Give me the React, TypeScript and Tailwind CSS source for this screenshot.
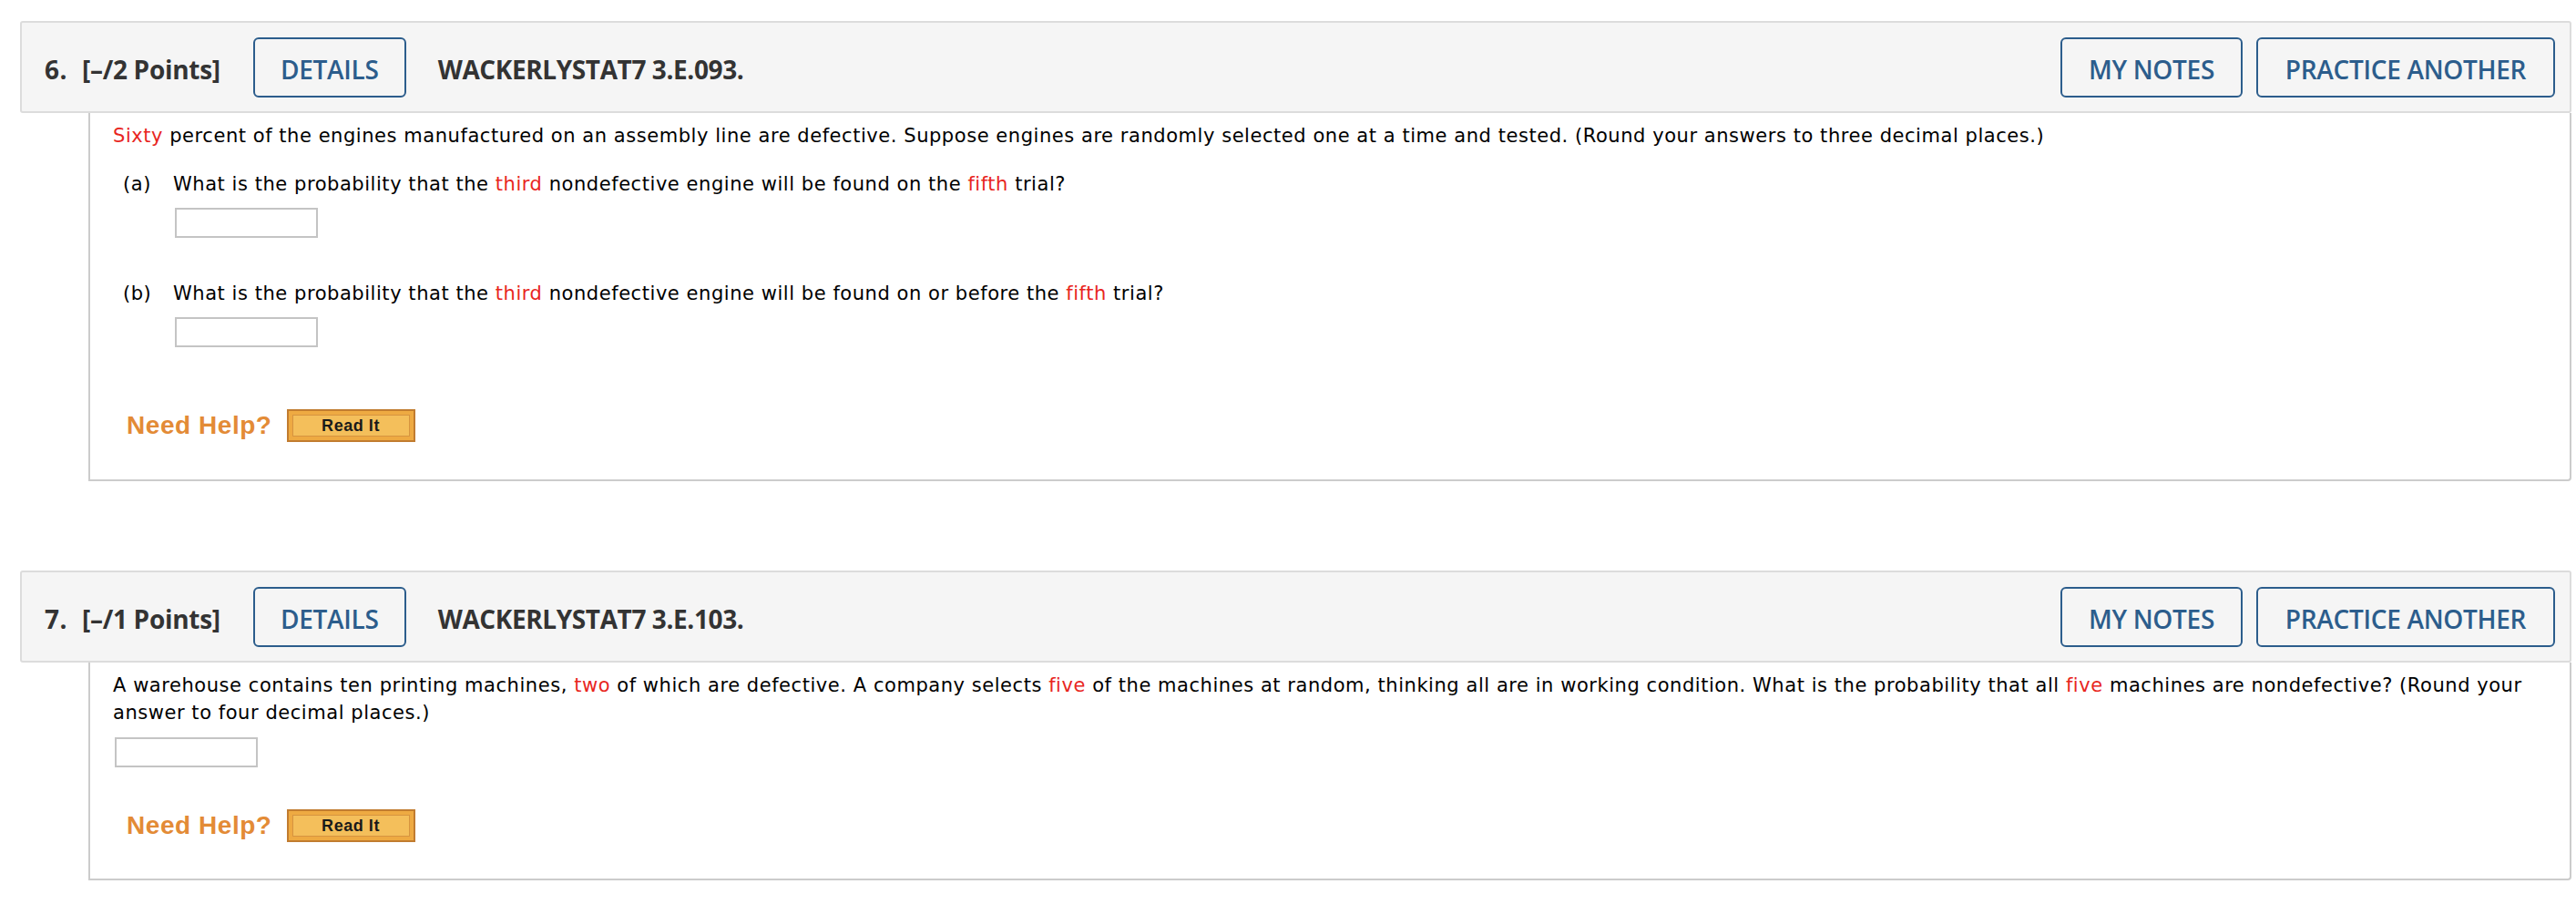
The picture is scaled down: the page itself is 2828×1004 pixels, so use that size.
import React from 'react'

const Red = ({ children }: { children: React.ReactNode }) => (
  <span className="text-[#e8261e]">{children}</span>
)

const HeaderButton = ({ label, width }: { label: string; width: string }) => (
  <button
    className={`h-[66px] ${width} border-2 border-[#2c5d8c] rounded-[6px] flex items-center justify-center pt-[5px] text-[#2c5d8c] text-[28px] font-semibold tracking-[-0.3px]`}
  >
    {label}
  </button>
)

const AnswerBox = () => (
  <div className="w-[157px] h-[33px] border-2 border-[#c4c4c4] bg-white" />
)

const NeedHelp = () => (
  <div className="flex items-center gap-[16px] pl-[15px]">
    <span className="text-[28px] font-bold text-[#e38b36] font-['Liberation_Sans',Arial,sans-serif]">
      Need Help?
    </span>
    <div className="w-[141px] h-[36px] border-2 border-[#c17c30] bg-[#eeaa42] p-[4px]">
      <div className="h-full border border-[#d69440] bg-[#f4bf5b] flex items-center justify-center">
        <span className="text-[18px] font-bold text-[#1a1a1a] font-['Liberation_Sans',Arial,sans-serif]">
          Read It
        </span>
      </div>
    </div>
  </div>
)

const QuestionHeader = ({ num, points, code }: { num: string; points: string; code: string }) => (
  <div className="h-[101px] bg-[#f5f5f5] border-2 border-[#dcdcdc] rounded-[3px] flex items-center pl-[25px] pr-[16px] font-['Open_Sans',sans-serif]">
    <span className="text-[28px] font-bold text-[#333] w-[41px] pt-[4px]">{num}</span>
    <span className="text-[28px] font-bold text-[#333] tracking-[-0.3px] pt-[4px]">{points}</span>
    <div className="ml-[36px]">
      <HeaderButton label="DETAILS" width="w-[168px]" />
    </div>
    <span className="ml-[35px] text-[28px] font-bold text-[#333] tracking-[-0.4px] pt-[4px]">{code}</span>
    <div className="ml-auto flex gap-[15px]">
      <HeaderButton label="MY NOTES" width="w-[200px]" />
      <HeaderButton label="PRACTICE ANOTHER" width="w-[328px]" />
    </div>
  </div>
)

const Part = ({ label, children }: { label: string; children: React.ReactNode }) => (
  <div className="pl-[11px]">
    <div className="flex leading-[30px]">
      <span className="w-[55px]">{label}</span>
      <span>{children}</span>
    </div>
    <div className="ml-[57px] mt-[11px]">
      <AnswerBox />
    </div>
  </div>
)

export default function App() {
  return (
    <div className="min-h-screen bg-white pt-[23px] pl-[22px] pr-[5px] font-['DejaVu_Sans',Verdana,sans-serif] text-[21px] tracking-[0.55px] text-black">
      {/* question 6 */}
      <div>
        <QuestionHeader num="6." points="[–/2 Points]" code="WACKERLYSTAT7 3.E.093." />
        <div className="ml-[75px] border-l-2 border-r-2 border-b-2 border-[#cccccc] rounded-br-[4px] pl-[25px] pt-[10px] pb-[38px]">
          <p className="leading-[30px]">
            <Red>Sixty</Red> percent of the engines manufactured on an assembly line are defective. Suppose engines are randomly selected one at a time and tested. (Round your answers to three decimal places.)
          </p>
          <div className="mt-[23px]">
            <Part label="(a)">
              What is the probability that the <Red>third</Red> nondefective engine will be found on the <Red>fifth</Red> trial?
            </Part>
          </div>
          <div className="mt-[46px]">
            <Part label="(b)">
              What is the probability that the <Red>third</Red> nondefective engine will be found on or before the <Red>fifth</Red> trial?
            </Part>
          </div>
          <div className="mt-[65px]">
            <NeedHelp />
          </div>
        </div>
      </div>

      {/* question 7 */}
      <div className="mt-[98px]">
        <QuestionHeader num="7." points="[–/1 Points]" code="WACKERLYSTAT7 3.E.103." />
        <div className="ml-[75px] border-l-2 border-r-2 border-b-2 border-[#cccccc] rounded-br-[4px] pl-[25px] pr-[40px] pt-[10px] pb-[37px]">
          <p className="leading-[30px]">
            A warehouse contains ten printing machines, <Red>two</Red> of which are defective. A company selects <Red>five</Red> of the machines at random, thinking all are in working condition. What is the probability that all <Red>five</Red> machines are nondefective? (Round your answer to four decimal places.)
          </p>
          <div className="mt-[12px] ml-[2px]">
            <AnswerBox />
          </div>
          <div className="mt-[43px]">
            <NeedHelp />
          </div>
        </div>
      </div>
    </div>
  )
}
